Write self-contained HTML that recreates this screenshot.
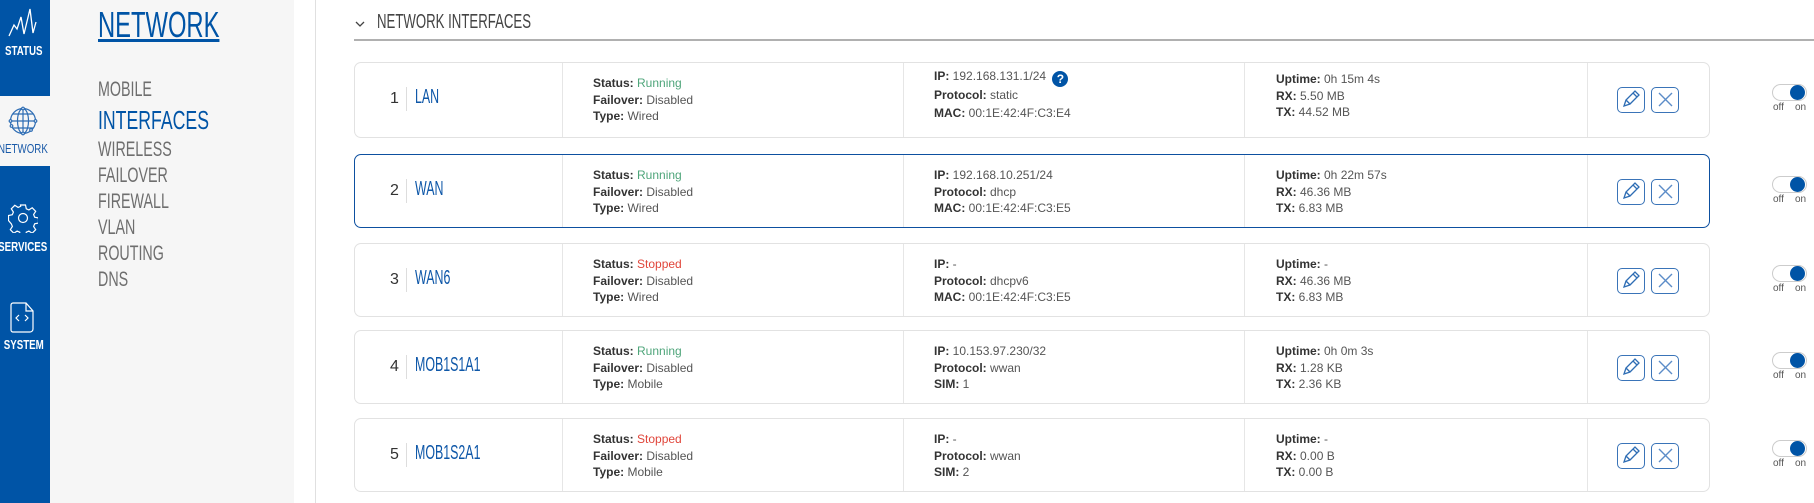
<!DOCTYPE html>
<html><head><meta charset="utf-8"><style>
*{box-sizing:border-box;margin:0;padding:0}
body{width:1814px;height:503px;overflow:hidden;background:#fff;font-family:"Liberation Sans",sans-serif;position:relative}
.abs{position:absolute}
.cond{display:inline-block;transform:scaleX(.78);transform-origin:left center;white-space:nowrap}
.sb{left:0;top:0;width:50px;height:503px;background:#0054a6}
.lbl{position:absolute;left:0;width:66px;transform:scaleX(.75);transform-origin:left center;text-align:center;font-weight:bold;font-size:13px}
.panel{left:50px;top:0;width:244px;height:503px;background:#f6f6f6}
.menu{left:98px;color:#6e6e6e;font-size:21px}
.menu .cond{transform:scaleX(.68)}
.card{left:354px;width:1356px;height:74px;border:1px solid #e2e2e2;border-radius:7px;background:#fff}
.card.sel{border-color:#0d50a0}
.div{position:absolute;top:0;bottom:0;width:1px;background:#e6e6e6}
.num{position:absolute;left:35px;top:27px;font-size:16px;color:#333}
.vs{position:absolute;left:51px;top:24px;width:1px;height:24px;background:#ddd}
.name{position:absolute;left:60px;top:23px;font-size:20px;color:#0e57a8}
.name .cond{transform:scaleX(.62)}
.info{position:absolute;top:12px;font-size:12px;line-height:16.5px;color:#555}
.info b{color:#333}
.g{color:#4ea57a}.r{color:#e0453a}
.btn{position:absolute;top:24px;width:28px;height:26px;border:1.3px solid #3a74b8;border-radius:5px}
.tog{left:1772px;width:35px;height:17px;border:1px solid #ccc;border-radius:9px;background:#fff}
.tog i{position:absolute;right:1px;top:0;width:15px;height:15px;border-radius:50%;background:#0054a6}
.tl{font-size:10px;color:#555}
</style></head><body>
<div class="abs sb"></div>
<div class="abs" style="left:0;top:0;width:50px;height:96px;background:#0054a6;border-bottom-right-radius:4px"></div>
<div class="abs" style="left:0;top:96px;width:50px;height:70px;background:#f6f6f6"></div>
<div class="abs" style="left:0;top:166px;width:50px;height:10px;background:#0054a6;border-top-right-radius:4px"></div>
<svg class="abs" style="left:8px;top:8px" width="30" height="30" viewBox="0 0 30 30"><path d="M1 28 L6 17 L9 21 L13 9 L16 26 L22 1 L25 25 L28 14" fill="none" stroke="#fff" stroke-width="1.3"/></svg>
<div class="abs" style="left:0;top:43px;width:50px;height:14px;color:#fff"><span class="lbl" style="left:-1px">STATUS</span></div>
<svg class="abs" style="left:8px;top:106px" width="30" height="30" viewBox="0 0 30 30" fill="none" stroke="#2e6db4" stroke-width="1.2"><circle cx="15" cy="15" r="12.5"/><ellipse cx="15" cy="15" rx="5.5" ry="12.5"/><line x1="15" y1="2.5" x2="15" y2="27.5"/><line x1="2.5" y1="15" x2="27.5" y2="15"/><path d="M5 8h20M5 22h20"/><circle cx="15" cy="2.5" r="1.3" fill="#fff"/><circle cx="15" cy="27.5" r="1.3" fill="#fff"/><circle cx="2.5" cy="15" r="1.3" fill="#fff"/><circle cx="27.5" cy="15" r="1.3" fill="#fff"/><circle cx="23" cy="24" r="1.3" fill="#fff"/><circle cx="3.5" cy="20" r="1.3" fill="#fff"/></svg>
<div class="abs" style="left:0;top:141px;width:50px;height:14px;color:#1a5aa8"><span class="lbl" style="left:-2px;font-weight:normal">NETWORK</span></div>
<svg class="abs" style="left:8px;top:203px" width="30" height="30" viewBox="0 0 30 30" fill="none" stroke="#fff" stroke-width="1.2"><path d="M12.5 2h5l.8 3.8 2.6 1.1 3.3-2.1 3.5 3.5-2.1 3.3 1.1 2.6 3.8.8v5l-3.8.8-1.1 2.6 2.1 3.3-3.5 3.5-3.3-2.1-2.6 1.1-.8 3.8h-5l-.8-3.8-2.6-1.1-3.3 2.1-3.5-3.5 2.1-3.3-1.1-2.6L.5 17.5v-5l3.8-.8 1.1-2.6-2.1-3.3 3.5-3.5 3.3 2.1 2.6-1.1z"/><circle cx="15" cy="15" r="4.5"/></svg>
<div class="abs" style="left:0;top:239px;width:50px;height:14px;color:#fff"><span class="lbl" style="left:-2px">SERVICES</span></div>
<svg class="abs" style="left:10px;top:302px" width="25" height="31" viewBox="0 0 25 31" fill="none" stroke="#fff" stroke-width="1.2"><path d="M3 1h13l7 8v18a3 3 0 0 1-3 3H3a2 2 0 0 1-2-2V3a2 2 0 0 1 2-2z"/><path d="M16 1v8h7"/><path d="M9 13l-3 3 3 3M15 13l3 3-3 3"/></svg>
<div class="abs" style="left:0;top:337px;width:50px;height:14px;color:#fff"><span class="lbl" style="left:-1px">SYSTEM</span></div>

<div class="abs panel"></div>
<div class="abs" style="left:98px;top:5px;font-size:36px;color:#0054a6;line-height:40px"><span class="cond" style="transform:scaleX(.66);text-decoration:underline;text-decoration-thickness:3px;text-underline-offset:2px">NETWORK</span></div>
<div class="abs menu" style="top:78px"><span class="cond">MOBILE</span></div>
<div class="abs menu" style="top:105px;font-size:26px;color:#0054a6"><span class="cond">INTERFACES</span></div>
<div class="abs menu" style="top:138px"><span class="cond">WIRELESS</span></div>
<div class="abs menu" style="top:164px"><span class="cond">FAILOVER</span></div>
<div class="abs menu" style="top:190px"><span class="cond">FIREWALL</span></div>
<div class="abs menu" style="top:216px"><span class="cond">VLAN</span></div>
<div class="abs menu" style="top:242px"><span class="cond">ROUTING</span></div>
<div class="abs menu" style="top:268px"><span class="cond">DNS</span></div>
<div class="abs" style="left:315px;top:0;width:1px;height:503px;background:#e0e0e0"></div>

<svg class="abs" style="left:355px;top:20px" width="10" height="8" viewBox="0 0 10 8"><path d="M1 2l4 4 4-4" fill="none" stroke="#444" stroke-width="1.3"/></svg>
<div class="abs" style="left:377px;top:11px;font-size:20px;color:#444"><span class="cond" style="transform:scaleX(.66)">NETWORK INTERFACES</span></div>
<div class="abs" style="left:354px;top:39px;width:1460px;height:2px;background:#b0b0b0"></div>

<div class="abs card" style="top:62px;height:76px"><div class="num">1</div><div class="vs"></div><div class="name"><span class="cond">LAN</span></div><div class="div" style="left:207px"></div>
<div class="info" style="left:238px"><b>Status:</b> <span class="g">Running</span><br><b>Failover:</b> Disabled<br><b>Type:</b> Wired</div><div class="div" style="left:548px"></div>
<div class="info" style="left:579px;top:5px;line-height:17.5px"><b>IP:</b> 192.168.131.1/24 <span style="display:inline-block;width:16px;height:16px;border-radius:50%;background:#0054a6;color:#fff;font-weight:bold;font-size:12px;text-align:center;line-height:16px;vertical-align:-3px;margin-left:3px">?</span><br><b>Protocol:</b> static<br><b>MAC:</b> 00:1E:42:4F:C3:E4</div><div class="div" style="left:889px"></div>
<div class="info" style="left:921px;top:8px"><b>Uptime:</b> 0h 15m 4s<br><b>RX:</b> 5.50 MB<br><b>TX:</b> 44.52 MB</div><div class="div" style="left:1232px"></div>
<div class="btn" style="left:1262px"></div><div class="btn" style="left:1296px"></div></div>

<div class="abs card sel" style="top:154px"><div class="num">2</div><div class="vs"></div><div class="name"><span class="cond">WAN</span></div><div class="div" style="left:207px"></div>
<div class="info" style="left:238px"><b>Status:</b> <span class="g">Running</span><br><b>Failover:</b> Disabled<br><b>Type:</b> Wired</div><div class="div" style="left:548px"></div>
<div class="info" style="left:579px"><b>IP:</b> 192.168.10.251/24<br><b>Protocol:</b> dhcp<br><b>MAC:</b> 00:1E:42:4F:C3:E5</div><div class="div" style="left:889px"></div>
<div class="info" style="left:921px"><b>Uptime:</b> 0h 22m 57s<br><b>RX:</b> 46.36 MB<br><b>TX:</b> 6.83 MB</div><div class="div" style="left:1232px"></div>
<div class="btn" style="left:1262px"></div><div class="btn" style="left:1296px"></div></div>

<div class="abs card" style="top:243px"><div class="num">3</div><div class="vs"></div><div class="name"><span class="cond">WAN6</span></div><div class="div" style="left:207px"></div>
<div class="info" style="left:238px"><b>Status:</b> <span class="r">Stopped</span><br><b>Failover:</b> Disabled<br><b>Type:</b> Wired</div><div class="div" style="left:548px"></div>
<div class="info" style="left:579px"><b>IP:</b> -<br><b>Protocol:</b> dhcpv6<br><b>MAC:</b> 00:1E:42:4F:C3:E5</div><div class="div" style="left:889px"></div>
<div class="info" style="left:921px"><b>Uptime:</b> -<br><b>RX:</b> 46.36 MB<br><b>TX:</b> 6.83 MB</div><div class="div" style="left:1232px"></div>
<div class="btn" style="left:1262px"></div><div class="btn" style="left:1296px"></div></div>

<div class="abs card" style="top:330px"><div class="num">4</div><div class="vs"></div><div class="name"><span class="cond">MOB1S1A1</span></div><div class="div" style="left:207px"></div>
<div class="info" style="left:238px"><b>Status:</b> <span class="g">Running</span><br><b>Failover:</b> Disabled<br><b>Type:</b> Mobile</div><div class="div" style="left:548px"></div>
<div class="info" style="left:579px"><b>IP:</b> 10.153.97.230/32<br><b>Protocol:</b> wwan<br><b>SIM:</b> 1</div><div class="div" style="left:889px"></div>
<div class="info" style="left:921px"><b>Uptime:</b> 0h 0m 3s<br><b>RX:</b> 1.28 KB<br><b>TX:</b> 2.36 KB</div><div class="div" style="left:1232px"></div>
<div class="btn" style="left:1262px"></div><div class="btn" style="left:1296px"></div></div>

<div class="abs card" style="top:418px"><div class="num">5</div><div class="vs"></div><div class="name"><span class="cond">MOB1S2A1</span></div><div class="div" style="left:207px"></div>
<div class="info" style="left:238px"><b>Status:</b> <span class="r">Stopped</span><br><b>Failover:</b> Disabled<br><b>Type:</b> Mobile</div><div class="div" style="left:548px"></div>
<div class="info" style="left:579px"><b>IP:</b> -<br><b>Protocol:</b> wwan<br><b>SIM:</b> 2</div><div class="div" style="left:889px"></div>
<div class="info" style="left:921px"><b>Uptime:</b> -<br><b>RX:</b> 0.00 B<br><b>TX:</b> 0.00 B</div><div class="div" style="left:1232px"></div>
<div class="btn" style="left:1262px"></div><div class="btn" style="left:1296px"></div></div>

<svg class="abs" style="left:0;top:0" width="1814" height="503">
<defs>
<g id="ic">
<path d="M1624 106l2-6 9-9 4 4-9 9z M1633 93l4 4 M1626 100l4 4" fill="none" stroke="#2e6db4" stroke-width="1.3"/>
<path d="M1659 93l13 13M1672 93l-13 13" stroke="#5b8cc8" stroke-width="1.4"/>
</g>
</defs>
<use href="#ic" y="0"/><use href="#ic" y="92"/><use href="#ic" y="181"/><use href="#ic" y="268"/><use href="#ic" y="356"/>
</svg>
<div class="abs tog" style="top:84px"><i></i></div><div class="abs tl" style="left:1773px;top:102px">off</div><div class="abs tl" style="left:1795px;top:102px">on</div>
<div class="abs tog" style="top:176px"><i></i></div><div class="abs tl" style="left:1773px;top:194px">off</div><div class="abs tl" style="left:1795px;top:194px">on</div>
<div class="abs tog" style="top:265px"><i></i></div><div class="abs tl" style="left:1773px;top:283px">off</div><div class="abs tl" style="left:1795px;top:283px">on</div>
<div class="abs tog" style="top:352px"><i></i></div><div class="abs tl" style="left:1773px;top:370px">off</div><div class="abs tl" style="left:1795px;top:370px">on</div>
<div class="abs tog" style="top:440px"><i></i></div><div class="abs tl" style="left:1773px;top:458px">off</div><div class="abs tl" style="left:1795px;top:458px">on</div>
</body></html>
